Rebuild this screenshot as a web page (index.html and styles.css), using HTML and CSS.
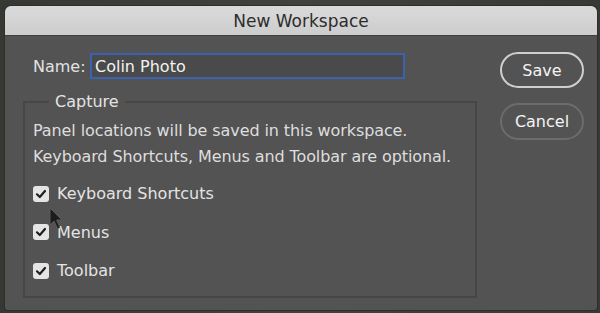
FILE: index.html
```html
<!DOCTYPE html>
<html>
<head>
<meta charset="utf-8">
<link rel="stylesheet" href="styles.css">
</head>
<body>
<div class="desk">
  <div class="dialog">
    <div class="titlebar">New Workspace</div>
    <div class="body">
      <div class="main">
        <div class="name-row">
          <span class="label">Name:</span>
          <div class="input">Colin Photo</div>
        </div>
        <fieldset class="group">
          <legend>Capture</legend>
          <p class="desc">Panel locations will be saved in this workspace.<br>Keyboard Shortcuts, Menus and Toolbar are optional.</p>
          <div class="checks">
            <div class="check"><span class="box"><svg viewBox="0 0 16 16" width="16" height="16"><path d="M4 8.3 L6.8 11 L12 5" fill="none" stroke="#1e1e1e" stroke-width="2.2" stroke-linecap="round" stroke-linejoin="round"/></svg></span>Keyboard Shortcuts</div>
            <div class="check"><span class="box"><svg viewBox="0 0 16 16" width="16" height="16"><path d="M4 8.3 L6.8 11 L12 5" fill="none" stroke="#1e1e1e" stroke-width="2.2" stroke-linecap="round" stroke-linejoin="round"/></svg></span>Menus</div>
            <div class="check"><span class="box"><svg viewBox="0 0 16 16" width="16" height="16"><path d="M4 8.3 L6.8 11 L12 5" fill="none" stroke="#1e1e1e" stroke-width="2.2" stroke-linecap="round" stroke-linejoin="round"/></svg></span>Toolbar</div>
          </div>
        </fieldset>
      </div>
      <div class="buttons">
        <button class="btn primary">Save</button>
        <button class="btn">Cancel</button>
      </div>
    </div>
  </div>
  <svg class="cursor" width="16" height="24" viewBox="0 0 16 24"><path d="M1 1 L1 18 L5 14 L8.5 21.5 L11 20.5 L7.6 13 L13 13 Z" fill="#1c1c1c" stroke="#5a5a5a" stroke-width="1" stroke-linejoin="round"/></svg>
</div>
</body>
</html>
```
FILE: styles.css
```css
html, body {
  margin: 0;
  padding: 0;
}
body {
  width: 600px;
  height: 313px;
  overflow: hidden;
  background: #3a3c38;
  font-family: "DejaVu Sans", "Liberation Sans", sans-serif;
}
.desk {
  position: relative;
  height: 313px;
  padding: 6px 3px 0 5px;
  box-sizing: border-box;
  background: linear-gradient(90deg, #353833 0%, #40423d 50%, #363934 100%);
}
.dialog {
  height: 304px;
  display: flex;
  flex-direction: column;
  background: #535353;
  border-radius: 6px 6px 3px 3px;
  overflow: hidden;
  box-shadow: 0 0 0 1px #2e2e2e;
}
.titlebar {
  flex: none;
  display: flex;
  align-items: center;
  justify-content: center;
  background: linear-gradient(#dadada, #cdcdcd);
  border-bottom: 1px solid #3f3f3f;
  color: #2c2c2c;
  font-size: 17px;
  padding-top: 1px;
  box-sizing: border-box;
  height: 30px;
}
.body {
  display: grid;
  grid-template-columns: 454px 84px;
  column-gap: 23px;
  padding: 16px 0 0 18px;
}
.main {
  display: flex;
  flex-direction: column;
}
.name-row {
  display: flex;
  align-items: center;
  height: 26px;
  margin-left: 10px;
  margin-top: 1px;
}
.label {
  color: #e2e2e2;
  font-size: 16px;
  width: 57px;
}
.input {
  width: 315px;
  height: 26px;
  box-sizing: border-box;
  border: 2px solid #3c61b0;
  background: #4a4a4a;
  color: #f2f2f2;
  font-size: 16px;
  display: flex;
  align-items: center;
  padding-left: 3px;
}
.group {
  margin: 14px 0 0 0;
  padding: 7px 8px 0 8px;
  border: 2px solid #464646;
  height: 205px;
  box-sizing: border-box;
}
.group legend {
  color: #e4e4e4;
  font-size: 16px;
  padding: 0 6px;
  margin-left: 16px;
  line-height: 18px;
}
.desc {
  margin: 0;
  color: #dedede;
  font-size: 16px;
  line-height: 26px;
  letter-spacing: -0.1px;
}
.checks {
  display: flex;
  flex-direction: column;
  gap: 21.5px;
  margin-top: 15px;
}
.check {
  display: flex;
  align-items: center;
  gap: 8px;
  height: 17px;
  color: #e4e4e4;
  font-size: 16px;
}
.box {
  width: 16px;
  height: 16px;
  border-radius: 3px;
  background: #e4e4e4;
  display: flex;
}
.buttons {
  display: flex;
  flex-direction: column;
  gap: 15px;
}
.btn {
  width: 84px;
  height: 37px;
  border-radius: 19px;
  background: transparent;
  border: 2px solid #6c6c6c;
  color: #f4f4f4;
  font-family: "DejaVu Sans", "Liberation Sans", sans-serif;
  font-size: 16px;
  padding: 0;
}
.btn.primary {
  height: 36px;
  border-color: #cfcfcf;
}
.cursor {
  position: absolute;
  left: 49px;
  top: 207px;
}
```
